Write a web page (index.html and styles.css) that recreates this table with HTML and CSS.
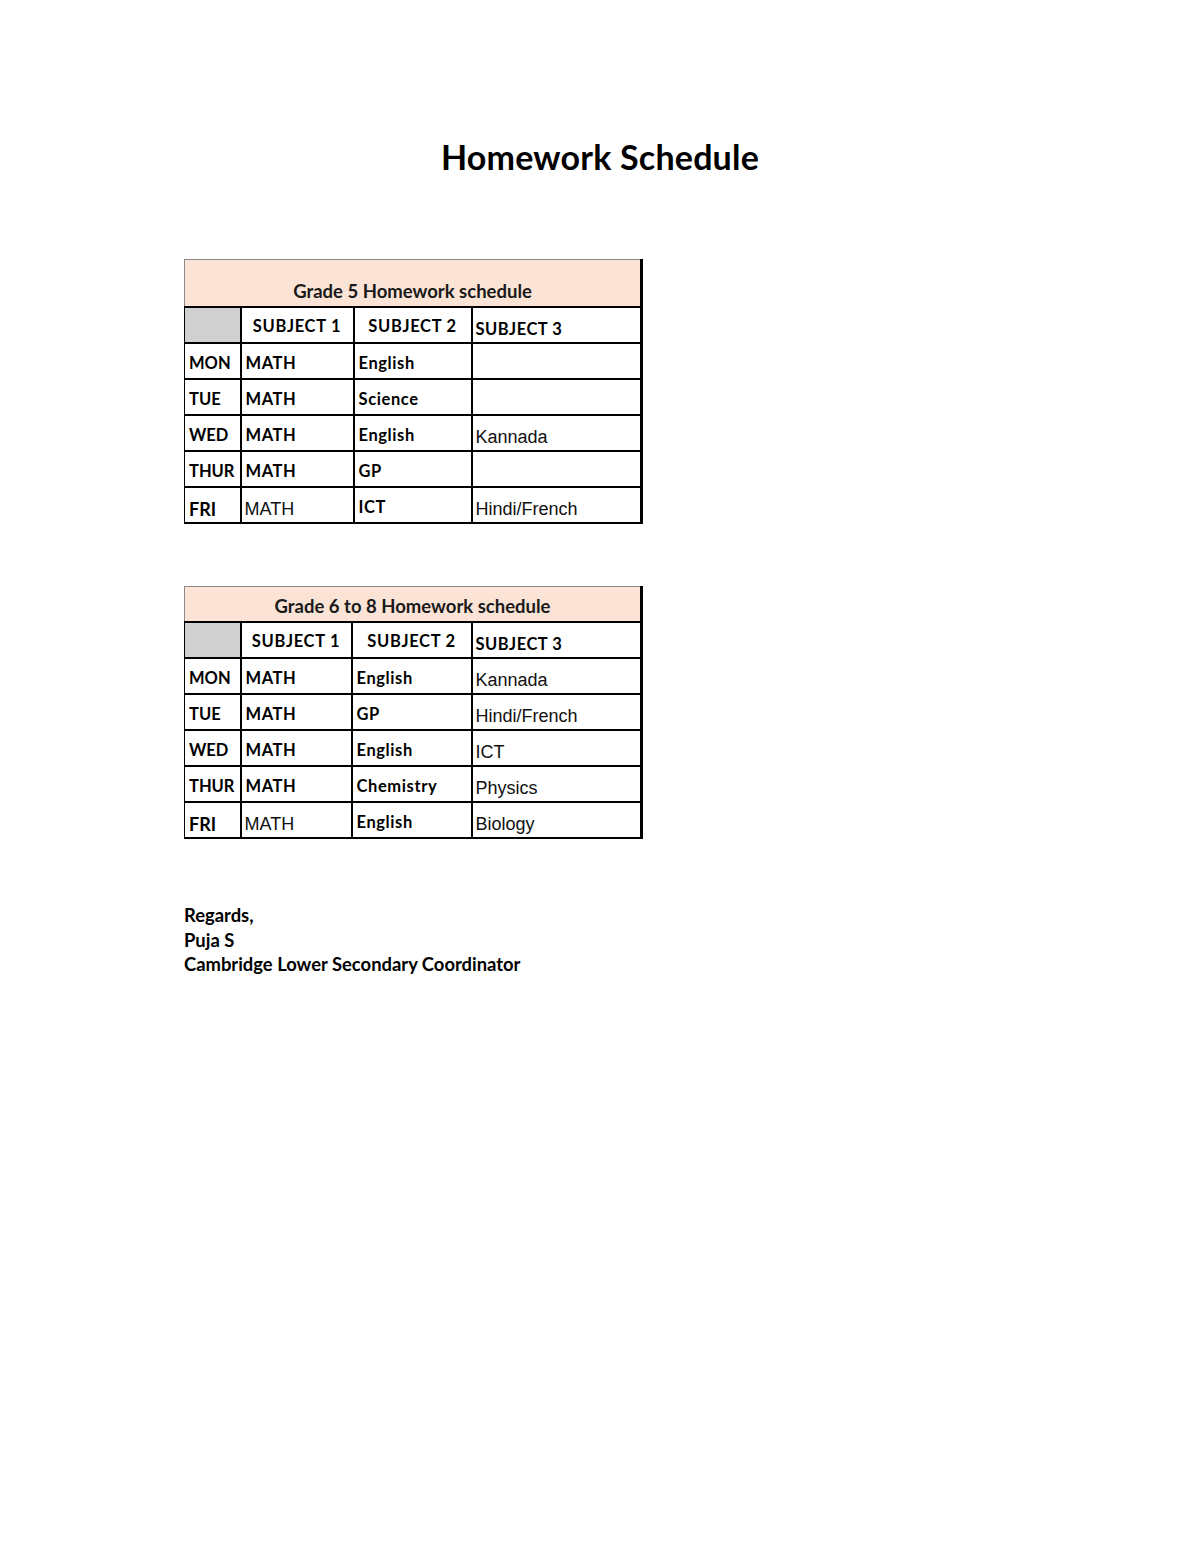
FILE: index.html
```html
<!DOCTYPE html>
<html lang="en">
<head>
<meta charset="utf-8">
<title>Homework Schedule</title>
<link rel="stylesheet" href="styles.css">
</head>
<body>
<div class="page">
  <h1 class="title">Homework Schedule</h1>

  <table class="sched sched-a">
    <colgroup><col class="c0"><col class="c1"><col class="c2"><col class="c3"></colgroup>
    <tr class="cap-row tall"><th colspan="4" class="cap">Grade 5 Homework schedule</th></tr>
    <tr class="head-row">
      <td class="blank"></td>
      <th class="hc">SUBJECT 1</th>
      <th class="hc">SUBJECT 2</th>
      <th class="hl">SUBJECT 3</th>
    </tr>
    <tr><td class="day">MON</td><td class="b">MATH</td><td class="b">English</td><td class="r"></td></tr>
    <tr><td class="day">TUE</td><td class="b">MATH</td><td class="b">Science</td><td class="r"></td></tr>
    <tr><td class="day">WED</td><td class="b">MATH</td><td class="b">English</td><td class="r">Kannada</td></tr>
    <tr><td class="day">THUR</td><td class="b">MATH</td><td class="b">GP</td><td class="r"></td></tr>
    <tr><td class="day big">FRI</td><td class="r">MATH</td><td class="b">ICT</td><td class="r">Hindi/French</td></tr>
  </table>

  <table class="sched sched-b">
    <colgroup><col class="c0"><col class="c1b"><col class="c2b"><col class="c3"></colgroup>
    <tr class="cap-row"><th colspan="4" class="cap">Grade 6 to 8 Homework schedule</th></tr>
    <tr class="head-row">
      <td class="blank"></td>
      <th class="hc">SUBJECT 1</th>
      <th class="hc">SUBJECT 2</th>
      <th class="hl">SUBJECT 3</th>
    </tr>
    <tr><td class="day">MON</td><td class="b">MATH</td><td class="b">English</td><td class="r">Kannada</td></tr>
    <tr><td class="day">TUE</td><td class="b">MATH</td><td class="b">GP</td><td class="r">Hindi/French</td></tr>
    <tr><td class="day">WED</td><td class="b">MATH</td><td class="b">English</td><td class="r">ICT</td></tr>
    <tr><td class="day">THUR</td><td class="b">MATH</td><td class="b">Chemistry</td><td class="r">Physics</td></tr>
    <tr><td class="day big">FRI</td><td class="r">MATH</td><td class="b">English</td><td class="r">Biology</td></tr>
  </table>

  <div class="sign">
    <p>Regards,</p>
    <p>Puja S</p>
    <p>Cambridge Lower Secondary Coordinator</p>
  </div>
</div>
</body>
</html>
```

FILE: styles.css
```css
html, body {
  margin: 0;
  padding: 0;
  background: #ffffff;
}

.page {
  width: 1200px;
  min-height: 1553px;
  box-sizing: border-box;
  padding: 136px 0 0 184px;
  font-family: Lato, "Open Sans", sans-serif;
  color: #000;
}

.title {
  margin: 0 0 0 -184px;
  width: 1200px;
  text-align: center;
  font-size: 34px;
  font-weight: 700;
  line-height: 42px;
  letter-spacing: 0.2px;
}

.sched {
  border-collapse: collapse;
  table-layout: fixed;
  width: 457px;
  margin-top: 81px;
}

.sched-b {
  margin-top: 62px;
}

.c0 { width: 56px; }
.c1 { width: 113px; }
.c2 { width: 118px; }
.c1b { width: 111px; }
.c2b { width: 120px; }
.c3 { width: 170px; }

.sched tr {
  height: 36px;
}

.sched tr.tall {
  height: 47px;
}

.sched td,
.sched th {
  border: 2px solid #000;
  padding: 0 4px 6px;
  font-size: 16.5px;
  line-height: 18px;
  vertical-align: bottom;
  text-align: left;
  white-space: nowrap;
  overflow: hidden;
}

.sched .cap {
  background: #fbe4d6;
  font-size: 18.5px;
  font-weight: 700;
  text-align: center;
  border-top: 1px solid #8a8a8a;
  border-left: 1px solid #8a8a8a;
  border-right: 3px solid #000;
  padding-bottom: 6px;
  color: #1a1a1a;
}

.sched tr > :last-child {
  border-right-width: 3px;
}

.sched tr > :first-child {
  border-left-width: 1.5px;
}

.sched .blank {
  background: #d0d0d0;
  border-top: 1px dotted #555;
}

.sched .hc {
  text-align: center;
  font-weight: 700;
  letter-spacing: 0.7px;
  padding-bottom: 7px;
}

.sched .hl {
  font-weight: 700;
  padding-left: 3px;
  padding-bottom: 4px;
  letter-spacing: 0.5px;
}

.sched .day {
  font-weight: 700;
  padding-left: 4px;
  padding-right: 0;
  letter-spacing: 0px;
}

.sched .day.big {
  font-size: 18px;
  padding-bottom: 4px;
}

.sched .b {
  font-weight: 700;
  letter-spacing: 0.6px;
}

.sched .r {
  font-family: "Liberation Sans", Arial, sans-serif;
  font-size: 18px;
  font-weight: 400;
  padding-left: 3px;
  padding-bottom: 4px;
  color: #111;
}

.sign {
  margin-top: 64px;
  font-size: 18.4px;
  font-weight: 700;
  line-height: 24.5px;
}

.sign p {
  margin: 0;
}
```
